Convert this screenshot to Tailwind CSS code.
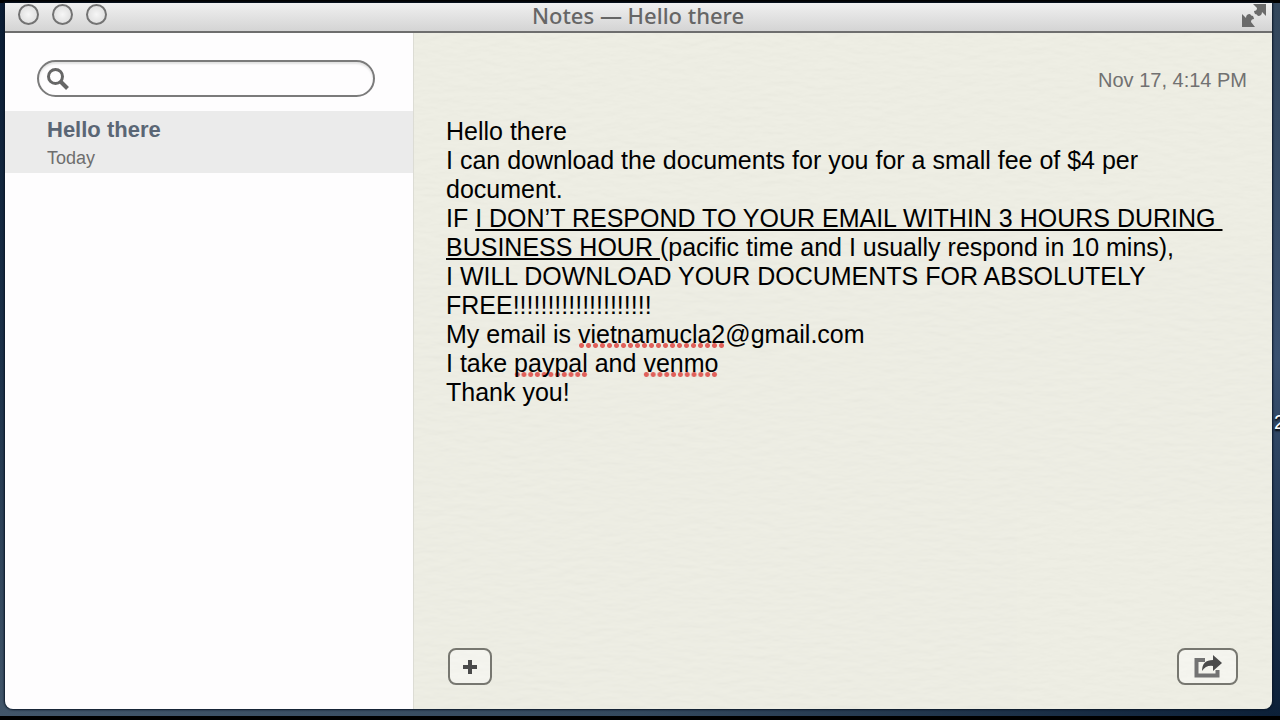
<!DOCTYPE html>
<html lang="en">

<head>
    <meta charset="UTF-8" />
    <meta name="viewport" content="width=device-width, initial-scale=1" />
    <title>Notes — Hello there</title>
    <script src="https://cdn.jsdelivr.net/npm/@tailwindcss/browser@4"></script>
</head>

<body class="h-screen overflow-hidden bg-black pt-[3px] pb-1 font-['Liberation_Sans',Arial,sans-serif]">
    <!-- Desktop -->
    <div class="relative h-full pl-[5px] pr-2 pb-[7px] bg-linear-to-r from-[#42566a] via-[#34495e] to-[#0c2038]">
        <div class="absolute inset-y-0 left-0 w-2 bg-linear-to-b from-[#0a1c33] via-[#1c3149] to-[#42566a]"></div>
        <div class="absolute inset-y-0 right-0 w-2 bg-linear-to-b from-[#33475c] via-[#3a5170] to-[#0c2038]"></div>
        <span class="absolute top-[407px] left-[calc(100%-6px)] text-xl leading-6 text-white [text-shadow:0_2px_2px_black]">2</span>

        <!-- Window -->
        <div class="relative flex flex-col h-full rounded-b-lg overflow-hidden shadow-[0_0_2px_1px_#0a1626]">
            <header class="flex items-center h-[30px] shrink-0 pl-[13px] pr-[6px] pb-[5px] border-b-2 border-[#6e6e6e] bg-linear-to-b from-[#f0f0f0] to-[#d4d4d4]">
                <div class="flex flex-1 gap-[13px]">
                    <button aria-label="Close" class="size-[21px] rounded-full border-2 border-[#737373] bg-radial from-[#f6f6f6] to-[#d9d9d9]"></button>
                    <button aria-label="Minimize" class="size-[21px] rounded-full border-2 border-[#737373] bg-radial from-[#f6f6f6] to-[#d9d9d9]"></button>
                    <button aria-label="Zoom" class="size-[21px] rounded-full border-2 border-[#737373] bg-radial from-[#f6f6f6] to-[#d9d9d9]"></button>
                </div>
                <h1 class="pr-2 font-['Noto_Sans',sans-serif] text-[22px] leading-[22px] font-medium text-[#666]">Notes — Hello there</h1>
                <div class="flex flex-1 justify-end">
                    <button aria-label="Full screen">
                        <svg class="w-6 h-6" viewBox="0 0 24 24" fill="#6b6b6b">
                            <path d="M11 1h13v12l-4-4q0 4-4 4-1-2-3-2-1-2-1-3 3 0 3-3z" />
                            <path d="M0 11l4 4q0-4 4-4 1 2 3 2 1 2 1 3-3 0-3 3l4 5H0z" />
                        </svg>
                    </button>
                </div>
            </header>

            <div class="flex flex-1 min-h-0">
                <!-- Note list -->
                <aside class="w-[409px] shrink-0 bg-[#fefdfe] border-r border-[#dcdcd4]">
                    <div class="relative pt-[27px] pb-[14px] pl-8 pr-[38px]">
                        <label for="search" class="absolute left-[42px] top-[35px]">
                            <svg class="size-[22px]" viewBox="0 0 22 22" fill="none" stroke="#666">
                                <circle cx="8.500" cy="8.500" r="7" stroke-width="3" />
                                <path d="M13.500 13.500l7 7" stroke-width="4" />
                            </svg>
                        </label>
                        <input id="search" type="text" aria-label="Search"
                            class="block w-full h-[37px] pl-9 pr-4 rounded-full border-2 border-[#7b7b7b] bg-transparent text-xl shadow-[inset_0_2px_2px_#e2e2e2] focus:outline-none" />
                    </div>
                    <a href="#note" class="block h-[62px] pl-[42px] pt-[6px] bg-[#ebebeb]">
                        <span class="block text-[22px] leading-[26px] font-bold text-[#5a6675]">Hello there</span>
                        <span class="block text-lg leading-[30px] text-[#6e6e6e]">Today</span>
                    </a>
                </aside>

                <!-- Note -->
                <main id="note" class="relative flex flex-col flex-1 bg-[#ebebdf]">
                    <svg class="absolute inset-0 size-full" aria-hidden="true">
                        <filter id="paper">
                            <feTurbulence type="fractalNoise" baseFrequency="0.05 0.16" numOctaves="3" seed="4" />
                            <feDiffuseLighting lighting-color="#ffffff" surfaceScale="0.700" diffuseConstant="1">
                                <feDistantLight azimuth="90" elevation="65" />
                            </feDiffuseLighting>
                        </filter>
                        <rect width="100%" height="100%" filter="url(#paper)" opacity="0.200" />
                    </svg>

                    <time class="relative pt-[34px] pr-[25px] text-right text-xl leading-[26px] text-[#717171]">Nov 17, 4:14 PM</time>

                    <div class="relative flex-1 pl-8 pt-6 text-[25px] leading-[29px] text-black">
                        <p>Hello there</p>
                        <p>I can download the documents for you for a small fee of $4 per</p>
                        <p>document.</p>
                        <p class="whitespace-pre">IF <u class="decoration-2 underline-offset-2">I DON’T RESPOND TO YOUR EMAIL WITHIN 3 HOURS DURING </u></p>
                        <p class="whitespace-pre"><u class="decoration-2 underline-offset-2">BUSINESS HOUR </u>(pacific time and I usually respond in 10 mins),</p>
                        <p>I WILL DOWNLOAD YOUR DOCUMENTS FOR ABSOLUTELY</p>
                        <p>FREE!!!!!!!!!!!!!!!!!!!!</p>
                        <p>My email is <span class="bg-[radial-gradient(circle,#e0605a_2px,transparent_3px)] bg-[length:7px_5px] bg-bottom [background-repeat:round_no-repeat]">vietnamucla2</span>@gmail.com</p>
                        <p>I take <span class="bg-[radial-gradient(circle,#e0605a_2px,transparent_3px)] bg-[length:7px_5px] bg-bottom [background-repeat:round_no-repeat]">paypal</span> and <span class="bg-[radial-gradient(circle,#e0605a_2px,transparent_3px)] bg-[length:7px_5px] bg-bottom [background-repeat:round_no-repeat]">venmo</span></p>
                        <p>Thank you!</p>
                    </div>

                    <footer class="relative flex justify-between pl-[34px] pr-[34px] pb-6">
                        <button aria-label="New note" class="flex items-center justify-center w-11 h-[37px] rounded-lg border-2 border-[#777770] bg-white/40">
                            <svg class="size-[14px]" viewBox="0 0 14 14" stroke="#4a4a4a" stroke-width="4">
                                <path d="M7 0v14M0 7h14" />
                            </svg>
                        </button>
                        <button aria-label="Share" class="flex items-center justify-center w-[61px] h-[37px] rounded-lg border-2 border-[#777770] bg-white/40">
                            <svg class="w-7 h-6" viewBox="0 0 28 24" fill="none">
                                <path d="M11 5H2.500v15.500H23.500V15" stroke="#737373" stroke-width="4" />
                                <path d="M8 16Q8 5 19 5V0l9 8-9 8v-5Q12 10 8 16z" fill="#4b4b4b" />
                            </svg>
                        </button>
                    </footer>
                </main>
            </div>
        </div>
    </div>
</body>

</html>
